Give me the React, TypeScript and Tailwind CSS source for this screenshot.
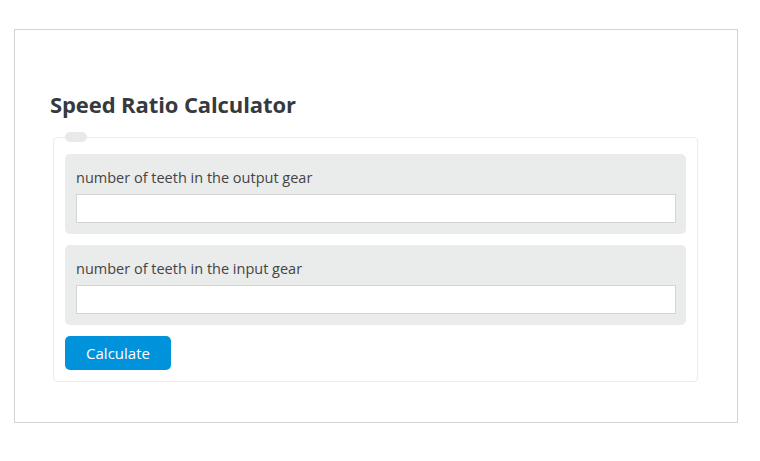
import React, { useState } from 'react';

// Speed ratio calculator card

const Field: React.FC<{ label: string; value: string; onChange: (v: string) => void }> = ({
  label,
  value,
  onChange,
}) => (
  <div className="rounded-[5px] bg-[#eaebeb] pl-[11px] pr-[10px] pt-[14px] pb-[11px]">
    <label className="block text-[14.5px] leading-[20px] text-[#444] mb-[6px]">{label}</label>
    <input
      type="text"
      value={value}
      onChange={(e) => onChange(e.target.value)}
      className="block w-full h-[29px] bg-white border border-[#d4d4d4] outline-none px-2 text-[14px]"
    />
  </div>
);

export default function App() {
  const [output, setOutput] = useState('');
  const [input, setInput] = useState('');

  return (
    <div className="min-h-screen bg-white pt-[29px] pl-[14px] pr-[22px] font-['Open_Sans',sans-serif]">
      <div className="border border-[#d2d2d7] h-[394px] pl-[35px] pr-[39px] pt-[59px]">
        <h2 className="text-[22px] leading-[30px] font-bold text-[#363a3e] tracking-[-0.1px]">
          Speed Ratio Calculator
        </h2>
        <div className="relative mt-[18px] ml-[3px] border border-[#ececec] rounded-[4px] px-[11px] pt-[16px] pb-[11px]">
          <div className="absolute -top-[6px] left-[11px] w-[22px] h-[10px] rounded-full bg-[#e8e9e9]" />
          <div className="flex flex-col gap-[11px]">
            <Field label="number of teeth in the output gear" value={output} onChange={setOutput} />
            <Field label="number of teeth in the input gear" value={input} onChange={setInput} />
            <div>
              <button className="h-[34px] w-[106px] rounded-[5px] bg-[#0093db] text-white text-[15px]">
                Calculate
              </button>
            </div>
          </div>
        </div>
      </div>
    </div>
  );
}
